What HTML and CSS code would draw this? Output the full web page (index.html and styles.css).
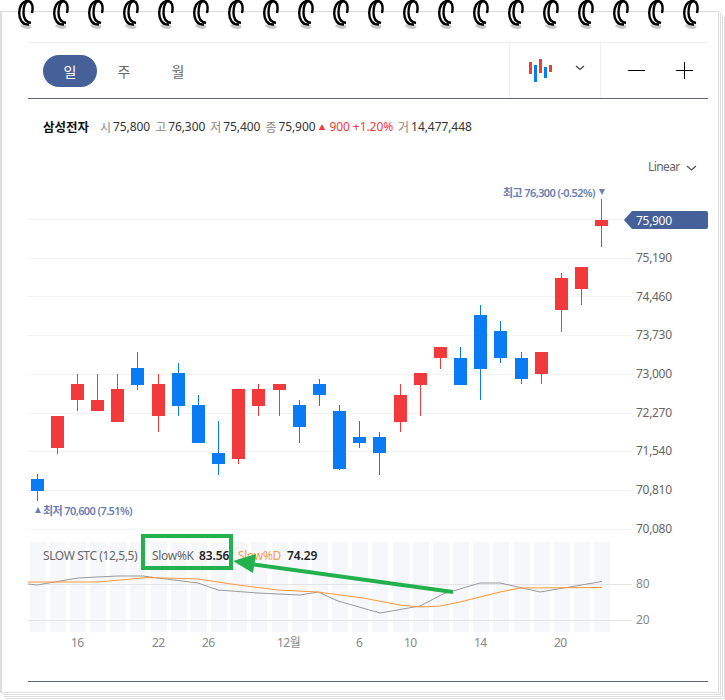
FILE: index.html
```html
<!DOCTYPE html>
<html lang="ko">
<head>
  <meta charset="UTF-8">
  <meta name="viewport" content="width=device-width, initial-scale=1.0">
  <title>삼성전자 차트</title>
  <link rel="stylesheet" href="styles.css">
</head>
<body>

  <!-- Notebook spiral, lies over the top edge of the sheet -->
  <svg class="spiral" width="725" height="30" viewBox="0 0 725 30">
    <defs>
      <g id="ring">
        <path class="ring-shadow" d="M3 25 Q8 29.500 13 26"/>
        <path class="ring-wire" d="M14 13 C15.500 6 14 1 9.500 1 C4 1 1.200 7 1.200 13 C1.200 19 4 25 11 24.500"/>
        <path class="ring-wire" d="M9.500 1 C6.500 3 5.500 8 5.500 13 C5.500 18 7.500 22 13 23"/>
      </g>
    </defs>
    <use href="#ring" x="18"/><use href="#ring" x="53"/><use href="#ring" x="88"/><use href="#ring" x="123"/>
    <use href="#ring" x="158"/><use href="#ring" x="193"/><use href="#ring" x="228"/><use href="#ring" x="263"/>
    <use href="#ring" x="298"/><use href="#ring" x="333"/><use href="#ring" x="368"/><use href="#ring" x="403"/>
    <use href="#ring" x="438"/><use href="#ring" x="473"/><use href="#ring" x="508"/><use href="#ring" x="543"/>
    <use href="#ring" x="578"/><use href="#ring" x="613"/><use href="#ring" x="648"/><use href="#ring" x="683"/>
  </svg>

  <div class="sheet">
    <div class="panel">

      <!-- Period tabs and chart tools -->
      <div class="toolbar">
        <div class="tabs">
          <span class="tab active">일</span>
          <span class="tab">주</span>
          <span class="tab">월</span>
        </div>
        <div class="tool type-tool">
          <svg width="24" height="24" viewBox="0 0 24 24">
            <rect class="up" x="0" y="3" width="3" height="12"/>
            <rect class="down" x="5" y="6" width="3" height="17"/>
            <rect class="up" x="10" y="0" width="3" height="14"/>
            <rect class="down" x="15" y="8" width="3" height="11"/>
            <rect class="up" x="20" y="6" width="3" height="7"/>
          </svg>
          <svg class="chevron-small" width="10" height="6" viewBox="0 0 10 6">
            <path d="M1 1 L5 4.500 L9 1"/>
          </svg>
        </div>
        <div class="tool zoom-tool">
          <svg width="17" height="17" viewBox="0 0 17 17"><rect y="8" width="17" height="1"/></svg>
          <svg width="17" height="17" viewBox="0 0 17 17"><rect y="8" width="17" height="1"/><rect x="8" width="1" height="17"/></svg>
        </div>
      </div>

      <!-- Quote summary -->
      <div class="quote">
        <strong class="name">삼성전자</strong>
        <span class="key first">시</span><span class="val">75,800</span>
        <span class="key">고</span><span class="val">76,300</span>
        <span class="key">저</span><span class="val">75,400</span>
        <span class="key">종</span><span class="val">75,900</span>
        <span class="rise"><i class="rise-mark">▲</i>900 +1.20%</span>
        <span class="key">거</span><span class="val">14,477,448</span>
      </div>

      <!-- Chart canvas, viewBox uses page coordinates -->
      <svg class="chart" width="680" height="541" viewBox="28 140 680 541">
        <text class="scale-name" x="648" y="171">Linear</text>
        <path class="chevron" d="M687 166 L691.500 170 L696 166"/>

        <!-- price grid -->
        <g class="grid">
          <rect x="28" y="219" width="604" height="1"/>
          <rect x="28" y="258" width="604" height="1"/>
          <rect x="28" y="296" width="604" height="1"/>
          <rect x="28" y="335" width="604" height="1"/>
          <rect x="28" y="374" width="604" height="1"/>
          <rect x="28" y="413" width="604" height="1"/>
          <rect x="28" y="451" width="604" height="1"/>
          <rect x="28" y="490" width="604" height="1"/>
          <rect x="28" y="529" width="604" height="1"/>
        </g>

        <g class="price-labels">
          <text x="636" y="262">75,190</text>
          <text x="636" y="301">74,460</text>
          <text x="636" y="339">73,730</text>
          <text x="636" y="378">73,000</text>
          <text x="636" y="417">72,270</text>
          <text x="636" y="455">71,540</text>
          <text x="636" y="494">70,810</text>
          <text x="636" y="533">70,080</text>
        </g>

        <!-- current price tag -->
        <path class="price-tag" d="M624 220 L632 211 L706 211 Q708 211 708 213 L708 227 Q708 229 706 229 L632 229 Z"/>
        <text class="price-tag-text" x="636" y="225">75,900</text>

        <!-- falling candles -->
        <g class="down">
          <rect x="31" y="479" width="13" height="12"/><rect x="37" y="474" width="1" height="27"/>
          <rect x="131" y="368" width="13" height="17"/><rect x="137" y="352" width="1" height="38"/>
          <rect x="172" y="373" width="13" height="33"/><rect x="178" y="363" width="1" height="53"/>
          <rect x="192" y="405" width="13" height="38"/><rect x="198" y="395" width="1" height="48"/>
          <rect x="212" y="453" width="13" height="11"/><rect x="218" y="421" width="1" height="54"/>
          <rect x="293" y="405" width="13" height="22"/><rect x="299" y="400" width="1" height="43"/>
          <rect x="313" y="384" width="13" height="11"/><rect x="319" y="379" width="1" height="27"/>
          <rect x="333" y="411" width="13" height="58"/><rect x="339" y="405" width="1" height="65"/>
          <rect x="353" y="437" width="13" height="6"/><rect x="359" y="421" width="1" height="27"/>
          <rect x="373" y="437" width="13" height="16"/><rect x="379" y="432" width="1" height="43"/>
          <rect x="454" y="358" width="13" height="27"/><rect x="460" y="347" width="1" height="38"/>
          <rect x="474" y="315" width="13" height="54"/><rect x="480" y="305" width="1" height="95"/>
          <rect x="494" y="331" width="13" height="27"/><rect x="500" y="321" width="1" height="42"/>
          <rect x="515" y="358" width="13" height="21"/><rect x="521" y="352" width="1" height="32"/>
        </g>

        <!-- rising candles -->
        <g class="up">
          <rect x="51" y="416" width="13" height="32"/><rect x="57" y="448" width="1" height="6"/>
          <rect x="71" y="384" width="13" height="16"/><rect x="77" y="374" width="1" height="37"/>
          <rect x="91" y="400" width="13" height="11"/><rect x="97" y="374" width="1" height="37"/>
          <rect x="111" y="389" width="13" height="33"/><rect x="117" y="374" width="1" height="48"/>
          <rect x="152" y="384" width="13" height="32"/><rect x="158" y="374" width="1" height="58"/>
          <rect x="232" y="389" width="13" height="70"/><rect x="238" y="459" width="1" height="5"/>
          <rect x="252" y="389" width="13" height="17"/><rect x="258" y="384" width="1" height="32"/>
          <rect x="273" y="384" width="13" height="6"/><rect x="279" y="384" width="1" height="32"/>
          <rect x="394" y="395" width="13" height="27"/><rect x="400" y="384" width="1" height="48"/>
          <rect x="414" y="373" width="13" height="12"/><rect x="420" y="373" width="1" height="43"/>
          <rect x="434" y="347" width="13" height="11"/><rect x="440" y="358" width="1" height="11"/>
          <rect x="535" y="352" width="13" height="22"/><rect x="541" y="374" width="1" height="10"/>
          <rect x="555" y="278" width="13" height="32"/><rect x="561" y="273" width="1" height="59"/>
          <rect x="575" y="267" width="13" height="22"/><rect x="581" y="289" width="1" height="16"/>
          <rect x="595" y="220" width="13" height="6"/><rect x="601" y="199" width="1" height="48"/>
        </g>

        <!-- high and low marks -->
        <text class="mark" x="503" y="197">최고 76,300 (-0.52%)</text>
        <path class="mark-arrow" d="M599 189 L605 189 L602 195 Z"/>
        <path class="mark-arrow" d="M35 513 L41 513 L38 507 Z"/>
        <text class="mark" x="43" y="515">최저 70,600 (7.51%)</text>

        <!-- stochastic pane background -->
        <g class="stripes">
          <rect x="30" y="542" width="16" height="90"/><rect x="50" y="542" width="16" height="90"/>
          <rect x="70" y="542" width="16" height="90"/><rect x="90" y="542" width="16" height="90"/>
          <rect x="110" y="542" width="16" height="90"/><rect x="130" y="542" width="16" height="90"/>
          <rect x="151" y="542" width="16" height="90"/><rect x="171" y="542" width="16" height="90"/>
          <rect x="191" y="542" width="16" height="90"/><rect x="211" y="542" width="16" height="90"/>
          <rect x="231" y="542" width="16" height="90"/><rect x="251" y="542" width="16" height="90"/>
          <rect x="272" y="542" width="16" height="90"/><rect x="292" y="542" width="16" height="90"/>
          <rect x="312" y="542" width="16" height="90"/><rect x="332" y="542" width="16" height="90"/>
          <rect x="352" y="542" width="16" height="90"/><rect x="372" y="542" width="16" height="90"/>
          <rect x="393" y="542" width="16" height="90"/><rect x="413" y="542" width="16" height="90"/>
          <rect x="433" y="542" width="16" height="90"/><rect x="453" y="542" width="16" height="90"/>
          <rect x="473" y="542" width="16" height="90"/><rect x="493" y="542" width="16" height="90"/>
          <rect x="514" y="542" width="16" height="90"/><rect x="534" y="542" width="16" height="90"/>
          <rect x="554" y="542" width="16" height="90"/><rect x="574" y="542" width="16" height="90"/>
          <rect x="594" y="542" width="16" height="90"/>
        </g>
        <rect class="level" x="28" y="584" width="604" height="1"/>
        <rect class="level" x="28" y="620" width="604" height="1"/>
        <text class="axis" x="636" y="588">80</text>
        <text class="axis" x="636" y="624">20</text>

        <polyline class="line-k" points="28,584 37,585 78,578 118,576 143,576 158,578 198,583 218,590 258,593 300,595 318,592 338,601 380,613 420,606 443,594 480,583 500,583 540,592 602,581.500"/>
        <polyline class="line-d" points="28,582 98,582 148,577.500 198,579 238,585 278,590 318,592 363,598 400,605 420,607 440,606 460,602 500,592 520,588 602,587.500"/>

        <text class="legend legend-name" x="43" y="560">SLOW STC (12,5,5)</text>
        <text class="legend" x="152" y="560">Slow%K</text>
        <text class="legend-value" x="199" y="560">83.56</text>
        <text class="legend legend-d" x="238" y="560">Slow%D</text>
        <text class="legend-value" x="287" y="560">74.29</text>

        <!-- date axis -->
        <g class="axis dates">
          <text x="71" y="647">16</text>
          <text x="152" y="647">22</text>
          <text x="202" y="647">26</text>
          <text x="277" y="647">12월</text>
          <text x="356" y="647">6</text>
          <text x="404" y="647">10</text>
          <text x="474" y="647">14</text>
          <text x="554" y="647">20</text>
        </g>

        <!-- green callout drawn on top of the screenshot -->
        <rect class="callout-box" x="143" y="536" width="88" height="32"/>
        <path class="callout-line" d="M453 592 L250 564"/>
        <path class="callout-head" d="M233 561 L256 554 L253 573 Z"/>
      </svg>
    </div>
  </div>

</body>
</html>
```

FILE: styles.css
```css
/* Page */
body {
  box-sizing: border-box;
  min-height: 700px;
  margin: 0;
  padding-top: 11px;
  background: #fff;
  font-family: "Noto Sans", "Noto Sans CJK KR", sans-serif;
  color: #333;
}

/* Notebook spiral */
.spiral {
  position: absolute;
  top: 0;
  left: 0;
  z-index: 2;
}

.ring-wire {
  fill: none;
  stroke: #000;
  stroke-width: 2.400;
}

.ring-shadow {
  fill: none;
  stroke: #c8c8c8;
  stroke-width: 3;
}

/* Paper sheet with stacked pages behind it */
.sheet {
  box-sizing: border-box;
  width: 719px;
  height: 682px;
  padding: 30px 8px 0 26px;
  border: 1px solid #ddd;
  border-left-width: 2px;
  background: #fff;
  box-shadow:
    1px 1px 0 #fff, 2px 2px 0 #ddd,
    3px 3px 0 #fff, 4px 4px 0 #ddd,
    5px 5px 0 #fff, 6px 6px 0 #ddd;
}

.panel {
  width: 680px;
  border-bottom: 1px solid #5f6670;
}

/* Toolbar */
.toolbar {
  display: flex;
  height: 55px;
  border-top: 1px solid #eee;
  border-bottom: 1px solid #5f6670;
}

.tabs {
  display: flex;
  flex: 1;
  align-items: center;
  padding-left: 15px;
}

.tab {
  display: flex;
  align-items: center;
  justify-content: center;
  width: 54px;
  height: 32px;
  font-size: 14px;
  color: #666;
}

.tab.active {
  border-radius: 16px;
  background: #46609a;
  color: #fff;
}

.tool {
  display: flex;
  align-items: center;
  border-left: 1px solid #eee;
}

.type-tool {
  width: 91px;
  padding-left: 19px;
  box-sizing: border-box;
}

.type-tool .chevron-small {
  margin: 0 0 5px 22px;
}

.chevron-small path {
  fill: none;
  stroke: #444;
  stroke-width: 1.300;
}

.zoom-tool {
  width: 108px;
  padding-left: 27px;
  box-sizing: border-box;
  gap: 31px;
}

.up {
  fill: #f23a3c;
}

.down {
  fill: #0a7cf3;
}

/* Quote summary */
.quote {
  display: flex;
  align-items: center;
  height: 55px;
  padding-left: 15px;
  font-size: 12px;
  white-space: nowrap;
}

.name {
  width: 57px;
  font-size: 12.500px;
  font-weight: 700;
  color: #111;
}

.key {
  width: 13px;
  margin-left: 5px;
  color: #888;
}

.key.first {
  margin-left: 0;
}

.val {
  letter-spacing: -0.070px;
  color: #333;
}

.rise {
  margin-left: 3px;
  letter-spacing: -0.070px;
  color: #f23a3c;
}

.rise-mark {
  margin-right: 4px;
  font-size: 7px;
  font-style: normal;
  vertical-align: 1px;
}

/* Chart canvas */
.chart {
  display: block;
  margin-top: -14px;
  font-size: 12px;
}

.chart text {
  fill: #666;
}

.chart .scale-name {
  letter-spacing: -0.600px;
}

.chart .chevron {
  fill: none;
  stroke: #555;
  stroke-width: 1.200;
}

.grid rect {
  fill: #f3f3f3;
}

.price-labels text,
.chart .price-tag-text {
  letter-spacing: -0.300px;
}

.chart .price-tag {
  fill: #46609a;
}

.chart .price-tag-text {
  fill: #fff;
}

.chart .mark {
  font-size: 11px;
  font-weight: 600;
  letter-spacing: -0.600px;
  fill: #6a80b4;
}

.mark-arrow {
  fill: #6a80b4;
}

.stripes rect {
  fill: #f6f7fb;
}

.level {
  fill: #e3e3e9;
}

.line-k,
.line-d {
  fill: none;
  stroke-width: 1;
}

.line-k {
  stroke: #999;
}

.line-d {
  stroke: #ff9a3c;
  stroke-width: 1.200;
}

.chart .legend {
  letter-spacing: -0.300px;
  fill: #666;
}

.chart .legend-name {
  letter-spacing: -0.400px;
}

.chart .legend-d {
  fill: #ff9a3c;
}

.chart .legend-value {
  font-weight: 600;
  letter-spacing: -0.100px;
  fill: #222;
}

.chart .axis,
.chart .axis text {
  fill: #888;
}

.chart .dates text {
  letter-spacing: -0.500px;
}

/* Green callout */
.callout-box {
  fill: none;
  stroke: #22b14c;
  stroke-width: 4;
}

.callout-line {
  fill: none;
  stroke: #22b14c;
  stroke-width: 4;
}

.callout-head {
  fill: #22b14c;
}
```
